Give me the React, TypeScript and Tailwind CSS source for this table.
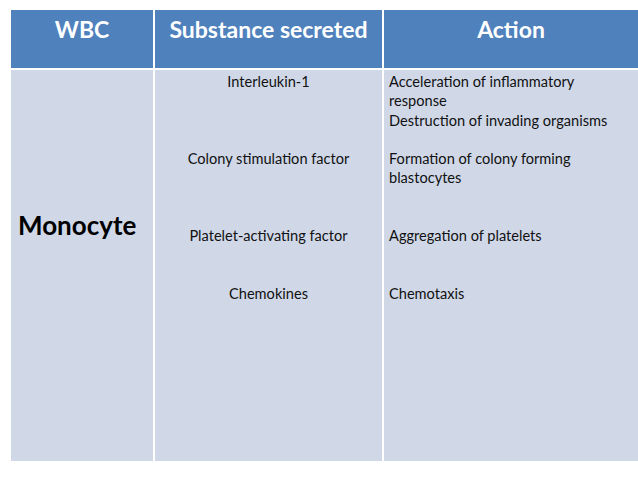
import React from "react";

const col2 = [
  "Interleukin-1",
  "",
  "",
  "",
  "Colony stimulation factor",
  "",
  "",
  "",
  "Platelet-activating factor",
  "",
  "",
  "Chemokines",
];

const col3 = [
  "Acceleration of inflammatory",
  "response",
  "Destruction of invading organisms",
  "",
  "Formation of colony forming",
  "blastocytes",
  "",
  "",
  "Aggregation of platelets",
  "",
  "",
  "Chemotaxis",
];

export default function App() {
  return (
    <div
      className="w-[638px] h-[478px] bg-white pt-[10px] pl-[11px] overflow-hidden"
      style={{ fontFamily: "Lato, 'Liberation Sans', sans-serif" }}
    >
      <div className="grid grid-cols-[142px_227px_1fr] grid-rows-[58px_391px] gap-[2px] bg-white">
        <div className="bg-[#4f81bd] text-white font-bold text-[23px] text-center pt-[4px] leading-[30px]">
          WBC
        </div>
        <div className="bg-[#4f81bd] text-white font-bold text-[23px] text-center pt-[4px] leading-[30px]">
          Substance secreted
        </div>
        <div className="bg-[#4f81bd] text-white font-bold text-[23px] text-center pt-[4px] leading-[30px]">
          Action
        </div>
        <div className="bg-[#d0d8e8] text-black font-bold text-[26px] pl-[7px] pt-[140px] leading-[30px]">
          Monocyte
        </div>
        <div className="bg-[#d0d8e8] text-[#111] text-[14.6px] text-center pt-[2px] leading-[19.3px]">
          {col2.map((t, i) => (
            <div key={i} className="h-[19.3px]">
              {t}
            </div>
          ))}
        </div>
        <div className="bg-[#d0d8e8] text-[#111] text-[14.6px] pl-[5px] pt-[2px] leading-[19.3px]">
          {col3.map((t, i) => (
            <div key={i} className="h-[19.3px]">
              {t}
            </div>
          ))}
        </div>
      </div>
    </div>
  );
}
